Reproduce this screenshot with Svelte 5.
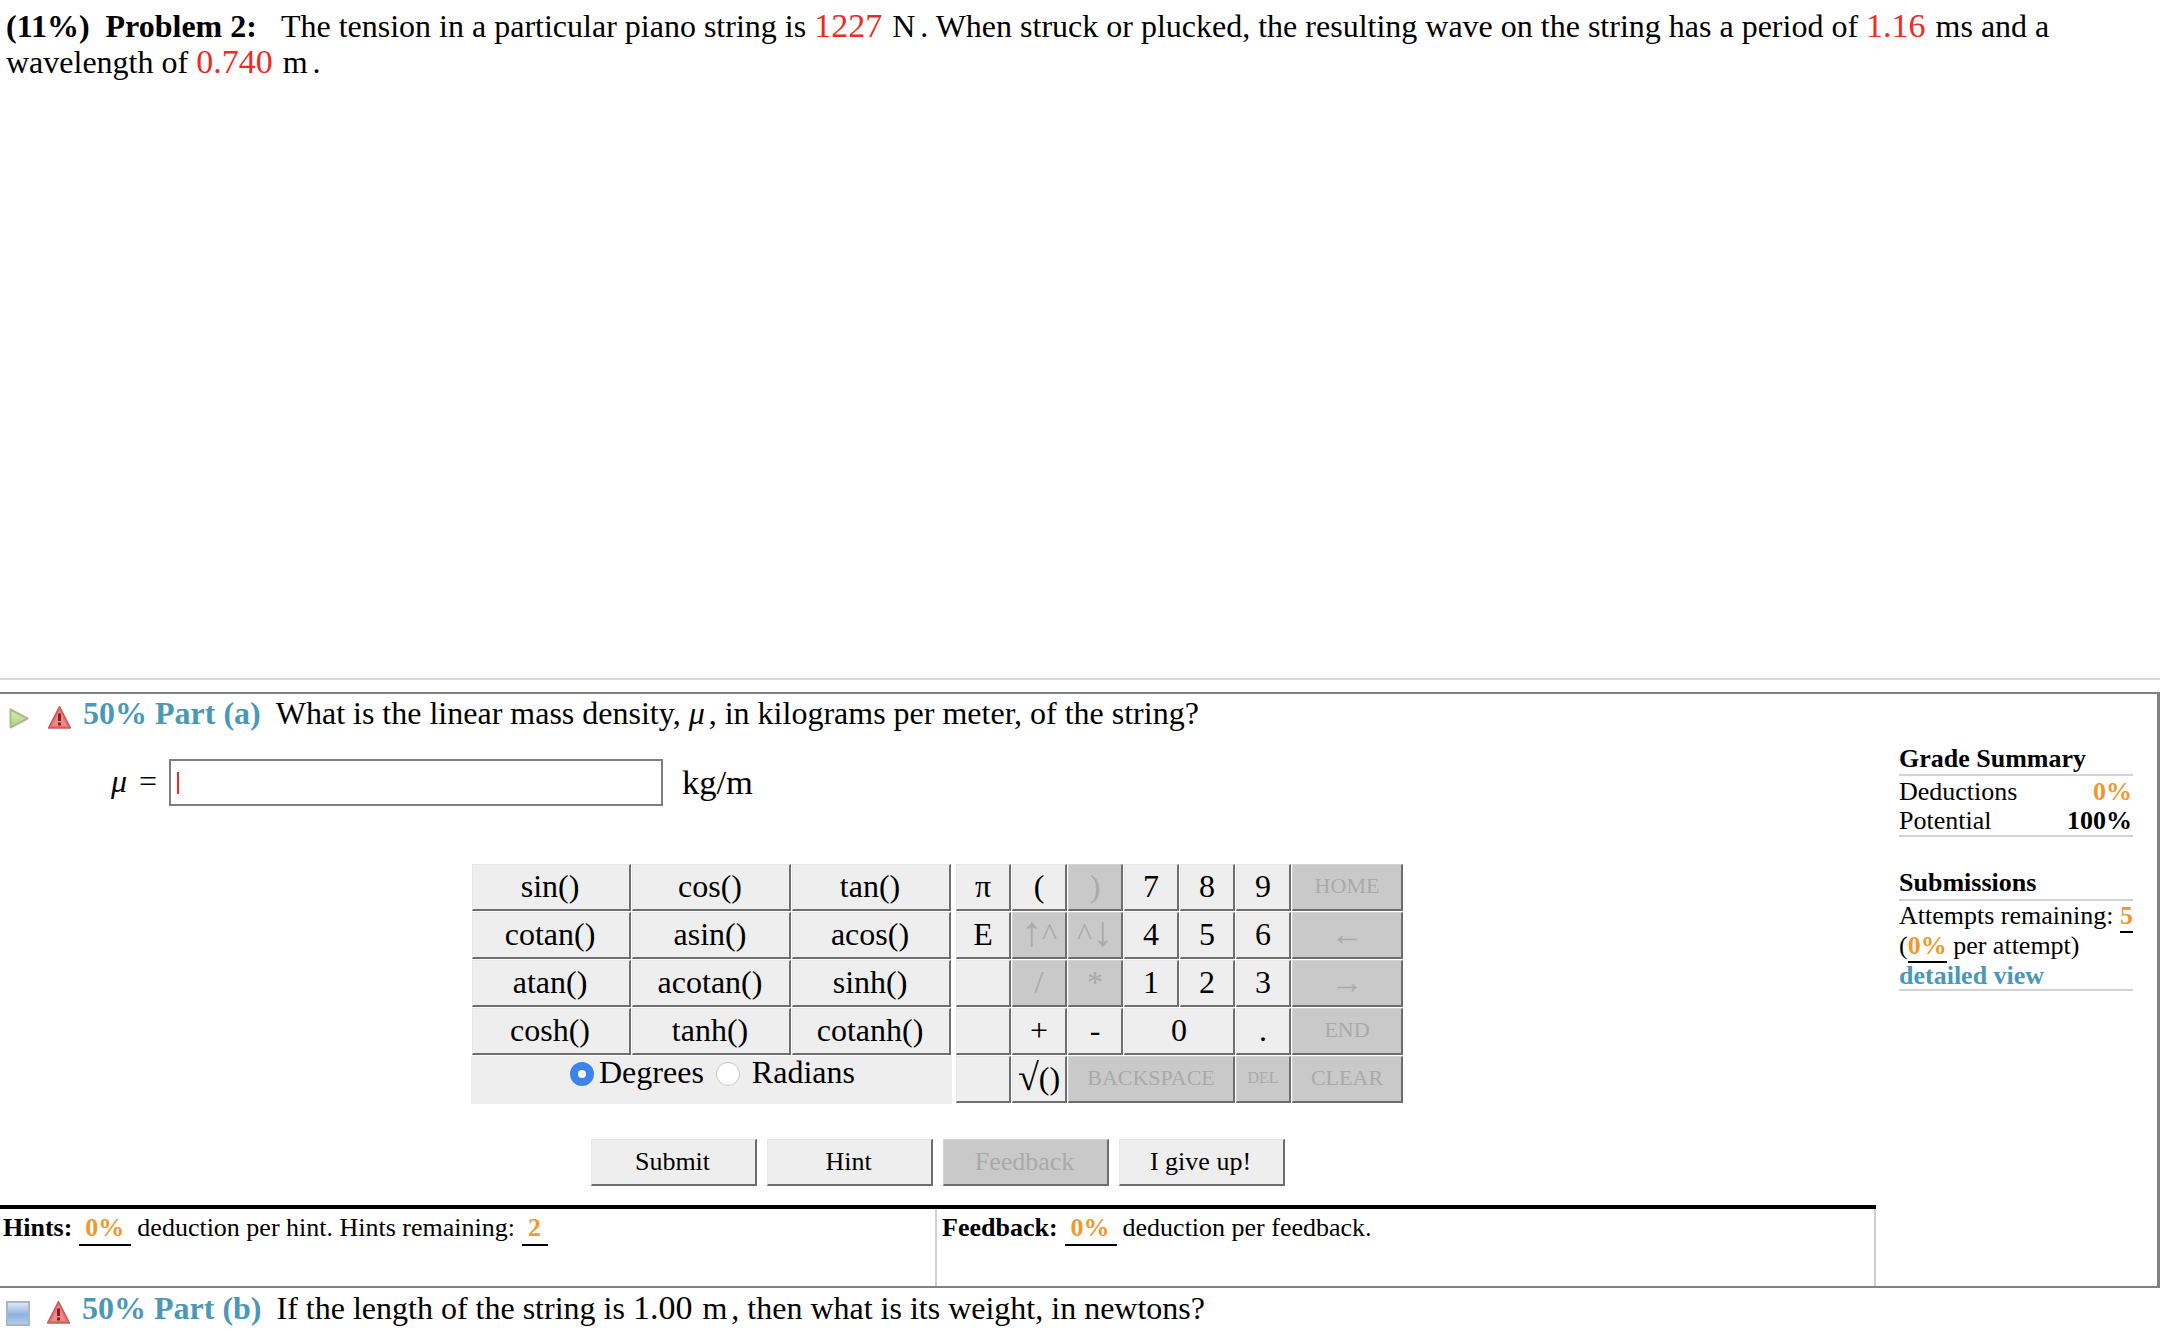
<script>
  const funcs = ['sin()','cos()','tan()','cotan()','asin()','acos()','atan()','acotan()','sinh()','cosh()','tanh()','cotanh()'];
  const pad = [
    {t:'π'},{t:'('},{t:')',off:1},{t:'7'},{t:'8'},{t:'9'},{t:'HOME',off:1,sm:1},
    {t:'E'},{pre:'↑',t:'^',off:1},{t:'^',post:'↓',off:1},{t:'4'},{t:'5'},{t:'6'},{side:'←',t:'',off:1},
    {t:''},{t:'/',off:1},{t:'*',off:1},{t:'1'},{t:'2'},{t:'3'},{side:'→',t:'',off:1},
    {t:''},{t:'+'},{t:'-'},{t:'0',span:2},{t:'.'},{t:'END',off:1,sm:1},
    {t:''},{root:'√',t:'()'},{t:'BACKSPACE',off:1,sm:1,span:3},{t:'DEL',off:1,xs:1},{t:'CLEAR',off:1,sm:1}
  ];
</script>

{#snippet warn()}
  <svg class="ico warn" viewBox="0 0 25 25" aria-hidden="true">
    <path d="M12.5 1.5 23.5 23H1.5Z" fill="#e26d6d" stroke="#c95a5a" stroke-width="1.4" stroke-linejoin="round"/>
    <path d="M12.5 5 20 21H5Z" fill="#ea8a8a"/>
    <rect x="11" y="8.5" width="3" height="7.5" fill="#8a1f1f"/>
    <rect x="11" y="17.5" width="3" height="3" fill="#8a1f1f"/>
  </svg>
{/snippet}

<main class="page">
  <section class="problem">
    <b>(11%)</b><b class="title">Problem 2:</b><span class="lead">The tension in a particular piano string is</span> <span class="num">1227</span> <span class="unit">N</span><span class="stop">.</span> When struck or plucked, the resulting wave on the string has a period of <span class="num">1.16</span> <span class="unit">ms</span> and a wavelength of <span class="num">0.740</span> <span class="unit">m</span><span class="stop">.</span>
  </section>
  <hr class="rule" />

  <section class="part">
    <div class="main">
      <div class="head">
        <svg class="ico play" viewBox="0 0 20 21" aria-hidden="true">
          <defs><linearGradient id="pg" x1="0" y1="0" x2="0" y2="1"><stop offset="0" stop-color="#dcebb4"/><stop offset="1" stop-color="#b4d07e"/></linearGradient></defs>
          <path d="M1.5 1.5 18.5 10.5 1.5 19.5Z" fill="url(#pg)" stroke="#a9bd84" stroke-width="2" stroke-linejoin="round"/>
        </svg>
        {@render warn()}
        <b class="label">50% Part (a)</b>
        <span class="question">What is the linear mass density, <i class="mu">μ</i><span class="comma">,</span> in kilograms per meter, of the string?</span>
      </div>

      <div class="answer">
        <span class="sym"><i>μ</i><span class="eq">=</span></span>
        <div class="input"><span class="caret"></span></div>
        <span class="units">kg/m</span>
      </div>

      <div class="calc">
        <div class="funcs">
          {#each funcs as f}<button class="key">{f}</button>{/each}
          <div class="mode">
            <span class="radio on"></span><span class="mode-a">Degrees</span>
            <span class="radio"></span><span class="mode-b">Radians</span>
          </div>
        </div>
        <div class="pad">
          {#each pad as k}
            <button class="key" class:off={k.off} class:sm={k.sm} class:xs={k.xs} class:s2={k.span===2} class:s3={k.span===3}>{#if k.pre}<span class="vert">{k.pre}</span>{/if}{#if k.root}<span class="root">{k.root}</span>{/if}{#if k.side}<span class="horiz">{k.side}</span>{/if}{k.t}{#if k.post}<span class="vert">{k.post}</span>{/if}</button>
          {/each}
        </div>
      </div>

      <div class="actions">
        <button class="key act">Submit</button>
        <button class="key act">Hint</button>
        <button class="key act off">Feedback</button>
        <button class="key act">I give up!</button>
      </div>

      <div class="info">
        <div class="cell"><b>Hints:</b><span class="val first">0%</span>deduction per hint. Hints remaining:<span class="val last">2</span></div>
        <div class="cell fb"><b>Feedback:</b><span class="val first">0%</span>deduction per feedback.</div>
      </div>
    </div>

    <aside class="side">
      <div class="s-title">Grade Summary</div>
      <div class="s-list">
        <div class="s-row"><span>Deductions</span><b class="orange">0%</b></div>
        <div class="s-row"><span>Potential</span><b>100%</b></div>
      </div>
      <div class="s-title sub">Submissions</div>
      <div class="s-text">
        <div class="s-line">Attempts remaining: <span class="val tight">5</span></div>
        <div class="s-line">(<span class="val tight wide">0%</span> per attempt)</div>
        <div class="s-line short"><b class="blue">detailed view</b></div>
      </div>
    </aside>
  </section>

  <div class="head next">
    <svg class="ico box" viewBox="0 0 24 25" aria-hidden="true">
      <defs><linearGradient id="bg" x1="0" y1="0" x2="0" y2="1"><stop offset="0" stop-color="#e6edf6"/><stop offset=".55" stop-color="#8db2de"/><stop offset="1" stop-color="#b8cfe9"/></linearGradient></defs>
      <rect x="1" y="1" width="22" height="23" fill="url(#bg)" stroke="#a8b8c8" stroke-width="2"/>
    </svg>
    {@render warn()}
    <b class="label">50% Part (b)</b>
    <span class="question">If the length of the string is <span class="big">1.00</span> <span class="unit">m</span><span class="comma">,</span> then what is its weight, in newtons?</span>
  </div>
</main>

<style>
  :global(body) { margin: 0; background: #fff; }
  .page {
    width: 2160px;
    height: 1332px;
    overflow: hidden;
    font-family: "Liberation Serif", "Times New Roman", serif;
    font-size: 32px;
    line-height: 36px;
    color: #000;
  }
  .problem { box-sizing: border-box; height: 678px; padding: 8px 60px 0 6px; }
  .title { margin-left: 16px; }
  .lead { margin-left: 24px; }
  .num { color: #ee2a24; font-size: 34px; }
  .big { font-size: 34px; }
  .unit { margin-left: 2px; }
  .stop { margin-left: 5px; }
  .rule { height: 2px; margin: 0 0 12px; border: 0; background: #d9d9d9; }

  .part {
    box-sizing: border-box;
    width: 2160px;
    display: flex;
    border-top: 2px solid #808080;
    border-right: 3px solid #808080;
    border-bottom: 2px solid #808080;
  }
  .main { width: 1876px; flex: none; }
  .head { display: flex; height: 36px; padding-top: 1px; white-space: pre; position: relative; }
  .head.next { padding-top: 2px; }
  .ico { flex: none; }
  .play { width: 20px; height: 21px; margin: 13px 18px 0 9px; filter: blur(.4px); }
  .warn { width: 25px; height: 25px; margin: 10px 11px 0 0; filter: blur(.3px); }
  .box { width: 24px; height: 25px; margin: 11px 16px 0 6px; filter: blur(.4px); }
  .label { color: #4a98b8; margin-right: 15px; }
  .comma { margin-left: 4px; }
  .question { white-space: pre; }

  .answer { display: flex; align-items: center; height: 47px; margin-top: 28px; padding-left: 111px; }
  .sym { width: 58px; flex: none; margin-top: -3px; }
  .eq { margin-left: 12px; }
  .input { box-sizing: border-box; width: 494px; height: 47px; border: 2px solid #808080; display: flex; align-items: center; padding-left: 6px; }
  .caret { width: 2px; height: 22px; background: #ee2a24; }
  .units { margin: -2px 0 0 19px; font-size: 34.5px; }

  .calc { display: flex; margin: 58px 0 0 472px; }
  .funcs { display: grid; grid-template-columns: repeat(3, 160px); grid-auto-rows: 48px; margin-right: 4px; }
  .pad { display: grid; grid-template-columns: repeat(6, 56px) 112px; grid-auto-rows: 48px; }
  .key {
    box-sizing: border-box;
    margin: 0 1px 1px 0;
    padding: 0 0 3px;
    border-style: solid;
    border-width: 1px 2px 2px 1px;
    border-color: #e6e6e6 #6e6e6e #6e6e6e #e6e6e6;
    border-radius: 0;
    background: #eee;
    color: #000;
    font: inherit;
    line-height: 36px;
    white-space: nowrap;
  }
  .funcs .key { padding-right: 2px; }
  .key.off { background: #c9c9c9; color: #aaa; border-left-color: #d4d4d4; border-top-color: #d4d4d4; }
  .key.sm { font-size: 22px; }
  .key.xs { font-size: 16px; }
  .vert { font-size: 42px; line-height: 0; vertical-align: -1px; }
  .horiz { font-size: 33px; line-height: 0; }
  .root { font-size: 38px; line-height: 0; vertical-align: -1px; }
  .s2 { grid-column: span 2; }
  .s3 { grid-column: span 3; }
  .mode {
    grid-column: span 3;
    display: flex;
    align-items: flex-start;
    margin-left: -1px;
    background: #eee;
    padding: 6px 0 0 99px;
    line-height: 28px;
  }
  .radio {
    box-sizing: border-box;
    flex: none;
    width: 24px;
    height: 24px;
    border-radius: 50%;
    background: #fff;
    border: 1px solid #c8c8c8;
  }
  .radio.on { background: #3d83f0; border: 8px solid #3d83f0; position: relative; }
  .radio.on::after { content: ""; position: absolute; inset: 0; background: #fff; border-radius: 50%; }
  .mode-a { margin: -4px 12px 0 5px; }
  .mode-b { margin: -4px 0 0 12px; }

  .actions { display: flex; gap: 10px; margin: 35px 0 0 591px; }
  .key.act { width: 166px; height: 47px; margin: 0; font-size: 26px; padding: 0 2px 0 0; }

  .info { display: flex; margin-top: 19px; border-top: 4px solid #000; height: 77px; font-size: 26px; line-height: 30px; }
  .cell { box-sizing: border-box; flex: none; width: 937px; padding: 4px 0 0 3px; border-right: 2px solid #d0d0d0; white-space: pre; }
  .cell.fb { width: 939px; padding-left: 5px; }
  .val {
    display: inline-block;
    margin-bottom: -3px;
    padding: 0 7px 1px 6px;
    border-bottom: 2px solid #000;
    font-weight: 700;
    color: #f0982f;
  }
  .val.first { margin: 0 6px -3px 7px; }
  .val.last { margin-left: 7px; }

  .side { box-sizing: border-box; width: 257px; padding: 50px 0 0 23px; font-size: 26px; line-height: 30px; }
  .s-title { font-weight: 700; width: 234px; border-bottom: 2px solid #d4d4d4; }
  .s-title.sub { margin-top: 31px; padding-bottom: 1px; }
  .s-list { width: 234px; padding: 1px 0 0; border-bottom: 2px solid #d4d4d4; line-height: 29px; }
  .s-row { display: flex; justify-content: space-between; padding-right: 1px; }
  .s-text { width: 234px; border-bottom: 2px solid #d4d4d4; white-space: nowrap; }
  .s-line { height: 30px; }
  .s-line.short { height: 28px; }
  .val.tight { padding: 0; }
  .val.wide { width: 39px; }
  .orange { color: #f0982f; }
  .blue { color: #4a98b8; }
</style>
